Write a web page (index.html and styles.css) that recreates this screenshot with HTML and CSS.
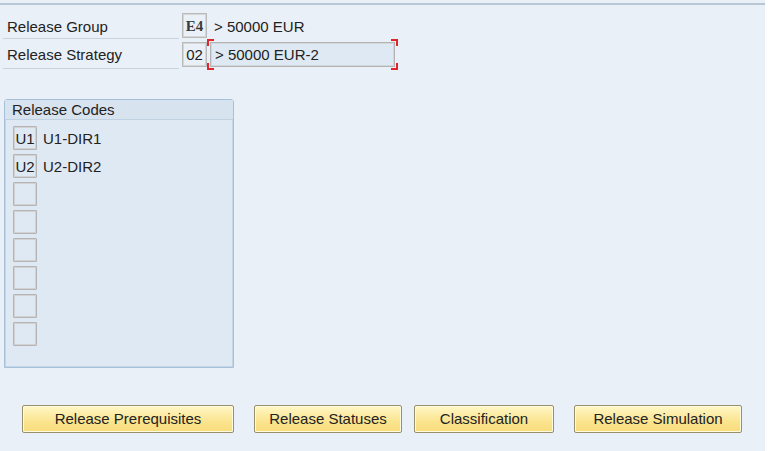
FILE: index.html
```html
<!DOCTYPE html>
<html>
<head>
<meta charset="utf-8">
<link rel="stylesheet" href="styles.css">
</head>
<body>
<div class="screen">
  <div class="topline"></div>
  <div class="form">
    <div class="row">
      <div class="label">Release Group</div>
      <div class="code mono">E4</div>
      <div class="desc">&gt; 50000 EUR</div>
    </div>
    <div class="row">
      <div class="label">Release Strategy</div>
      <div class="code">02</div>
      <div class="field-wrap">
        <span class="corner tl"></span><span class="corner tr"></span><span class="corner bl"></span><span class="corner br"></span>
        <div class="field">&gt; 50000 EUR-2</div>
      </div>
    </div>
  </div>

  <div class="group">
    <div class="group-head">Release Codes</div>
    <div class="group-body">
      <div class="crow"><div class="cbox">U1</div><div class="ctext">U1-DIR1</div></div>
      <div class="crow"><div class="cbox">U2</div><div class="ctext">U2-DIR2</div></div>
      <div class="crow"><div class="cbox"></div></div>
      <div class="crow"><div class="cbox"></div></div>
      <div class="crow"><div class="cbox"></div></div>
      <div class="crow"><div class="cbox"></div></div>
      <div class="crow"><div class="cbox"></div></div>
      <div class="crow"><div class="cbox"></div></div>
    </div>
  </div>

  <div class="buttons">
    <div class="btn b1">Release Prerequisites</div>
    <div class="btn b2">Release Statuses</div>
    <div class="btn b3">Classification</div>
    <div class="btn b4">Release Simulation</div>
  </div>
</div>
</body>
</html>
```

FILE: styles.css
```css
html, body {
  margin: 0;
  padding: 0;
}
body {
  width: 768px;
  height: 451px;
  background: #ffffff;
  font-family: "Liberation Sans", Arial, sans-serif;
  font-size: 15px;
  color: #222;
  overflow: hidden;
}
.screen {
  width: 765px;
  height: 451px;
  background: #eaf0f7;
  padding-top: 3px;
  box-sizing: border-box;
}
.topline {
  height: 2px;
  background: #b7c7d6;
}
.form {
  padding: 8px 0 0 3px;
}
.row {
  display: flex;
  align-items: stretch;
  height: 28px;
}
.row + .row {
  height: 30px;
}
.label {
  width: 172px;
  padding-left: 4px;
  border-bottom: 1px solid #c9d3dd;
  line-height: 27px;
  margin-bottom: 2px;
  color: #222;
}
.code {
  width: 23px;
  height: 23px;
  margin: 0 0 0 3px;
  border: 1px solid #b9b9b9;
  box-shadow: inset 0 0 0 1px #d6d6d6;
  line-height: 24px;
  text-align: center;
  color: #222;
  background: #eaf0f7;
}
.row + .row .code {
  margin-top: 1px;
}
.mono {
  font-family: "Liberation Serif", "Times New Roman", serif;
  font-weight: bold;
  color: #3a3a3a;
  font-size: 15px;
}
.desc {
  margin-left: 7px;
  line-height: 27px;
}
.field-wrap {
  position: relative;
  margin-left: 0;
  width: 191px;
  height: 31px;
  margin-top: -2px;
}
.corner {
  position: absolute;
  width: 5px;
  height: 5px;
  border-color: #e0262a;
  border-style: solid;
  border-width: 0;
}
.corner.tl { left: 0; top: 0; border-left-width: 2px; border-top-width: 2px; }
.corner.tr { right: 0; top: 0; border-right-width: 2px; border-top-width: 2px; }
.corner.bl { left: 0; bottom: 0; border-left-width: 2px; border-bottom-width: 2px; }
.corner.br { right: 0; bottom: 0; border-right-width: 2px; border-bottom-width: 2px; }
.field {
  position: absolute;
  left: 3px;
  top: 3px;
  right: 3px;
  bottom: 3px;
  border: 1px solid #b3b3b3;
  box-shadow: inset 0 0 0 1px #d3d8dc;
  background: #dfe9f3;
  padding-left: 4px;
  line-height: 23px;
}

.group {
  margin: 28px 0 0 4px;
  width: 228px;
  height: 267px;
  border: 1px solid #a8bfd8;
  border-radius: 3px 3px 0 0;
  background: #dfe9f3;
  box-shadow: inset 0 0 0 1px #c5d6e8;
  display: flex;
  flex-direction: column;
}
.group-head {
  height: 19px;
  line-height: 19px;
  padding-left: 7px;
  background: #d7e3ef;
  border-bottom: 1px solid #c0d1e2;
  color: #222;
}
.group-body {
  padding: 6px 0 0 8px;
  display: flex;
  flex-direction: column;
  gap: 4px;
}
.crow {
  display: flex;
  align-items: center;
  height: 24px;
}
.cbox {
  width: 22px;
  height: 22px;
  border: 1px solid #b4b4b4;
  box-shadow: inset 0 0 0 1px #d2d2d2;
  border-radius: 1px;
  text-align: center;
  line-height: 23px;
  color: #222;
}
.ctext {
  margin-left: 6px;
}

.buttons {
  display: flex;
  margin: 37px 0 0 22px;
}
.btn {
  height: 26px;
  line-height: 26px;
  text-align: center;
  border: 1px solid #98906c;
  border-radius: 2px;
  background: linear-gradient(#fff7c6, #fbe48e 60%, #f7dc7c);
  box-shadow: inset 0 0 0 1px #fffbe0;
  color: #222;
}
.b1 { width: 210px; }
.b2 { width: 146px; margin-left: 20px; }
.b3 { width: 138px; margin-left: 12px; }
.b4 { width: 166px; margin-left: 20px; }
```
